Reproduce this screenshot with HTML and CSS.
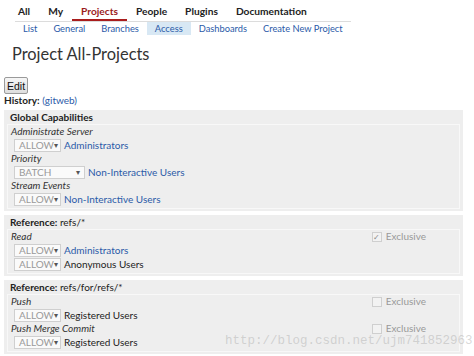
FILE: index.html
```html
<!DOCTYPE html>
<html>
  <head>
    <title>Project All-Projects</title>
    <link rel="stylesheet" href="styles.css">
  </head>
  <body>
    <!-- Top menu -->
    <div class="top-menu">
      <a class="top-item">All</a>
      <a class="top-item">My</a>
      <a class="top-item top-active">Projects</a>
      <a class="top-item">People</a>
      <a class="top-item">Plugins</a>
      <a class="top-item">Documentation</a>
    </div>
    <div class="sub-menu">
      <a class="sub-item">List</a>
      <a class="sub-item">General</a>
      <a class="sub-item">Branches</a>
      <a class="sub-item sub-active">Access</a>
      <a class="sub-item">Dashboards</a>
      <a class="sub-item">Create New Project</a>
    </div>

    <h1 class="page-title">Project All-Projects</h1>

    <button class="edit-button">Edit</button>
    <div class="history"><b>History:</b> <a class="link">(gitweb)</a></div>

    <!-- Global Capabilities -->
    <div class="section">
      <div class="section-title"><b>Global Capabilities</b></div>
      <div class="perm-box">
        <div class="perm-name">Administrate Server</div>
        <div class="rule"><span class="select">ALLOW <i>&#9662;</i></span><a class="link">Administrators</a></div>
        <div class="perm-name">Priority</div>
        <div class="rule"><span class="select select-wide">BATCH <i>&#9662;</i></span><a class="link">Non-Interactive Users</a></div>
        <div class="perm-name">Stream Events</div>
        <div class="rule"><span class="select">ALLOW <i>&#9662;</i></span><a class="link">Non-Interactive Users</a></div>
      </div>
    </div>

    <!-- refs/* -->
    <div class="section">
      <div class="section-title"><b>Reference:</b> refs/*</div>
      <div class="perm-box">
        <div class="perm-head">
          <span class="perm-name">Read</span>
          <label class="exclusive"><span class="check">&#10003;</span>Exclusive</label>
        </div>
        <div class="rule"><span class="select">ALLOW <i>&#9662;</i></span><a class="link">Administrators</a></div>
        <div class="rule"><span class="select">ALLOW <i>&#9662;</i></span><span>Anonymous Users</span></div>
      </div>
    </div>

    <!-- refs/for/refs/* -->
    <div class="section">
      <div class="section-title"><b>Reference:</b> refs/for/refs/*</div>
      <div class="perm-box">
        <div class="perm-head">
          <span class="perm-name">Push</span>
          <label class="exclusive"><span class="check"></span>Exclusive</label>
        </div>
        <div class="rule"><span class="select">ALLOW <i>&#9662;</i></span><span>Registered Users</span></div>
        <div class="perm-head">
          <span class="perm-name">Push Merge Commit</span>
          <label class="exclusive"><span class="check"></span>Exclusive</label>
        </div>
        <div class="rule"><span class="select">ALLOW <i>&#9662;</i></span><span>Registered Users</span></div>
      </div>
    </div>

    <div class="watermark">http://blog.csdn.net/ujm741852963</div>
  </body>
</html>
```
FILE: styles.css
```css
body {
  font-family: Lato, "Open Sans", sans-serif;
  font-size: 10px;
  color: #222;
  margin: 0;
  padding: 0 4px;
  position: relative;
  height: 356px;
  overflow: hidden;
}
a {
  text-decoration: none;
}
.link {
  color: #2a5aa8;
}

/* menus */
.top-menu {
  display: flex;
  padding: 4px 0 0 5px;
  white-space: nowrap;
}
.top-item {
  font-weight: bold;
  font-size: 10.2px;
  color: #222;
  padding: 0 9px;
  line-height: 15px;
  height: 15px;
  border-bottom: 2px solid transparent;
}
.top-active {
  color: #9b1c1c;
  border-bottom-color: #a91d1d;
}
.sub-menu {
  display: flex;
  width: 336px;
  margin-left: 11px;
  border-top: 1px solid #dcdcdc;
  white-space: nowrap;
}
.sub-item {
  color: #2a5aa8;
  padding: 1px 8px 0 8px;
  line-height: 12px;
  font-size: 9.3px;
}
.sub-active {
  background-color: #d8e8f4;
}

.page-title {
  font-size: 16.4px;
  font-weight: normal;
  color: #333;
  line-height: 23px;
  margin: 7px 0 12px 8px;
}

.edit-button {
  display: block;
  font-family: "Liberation Sans", sans-serif;
  font-size: 10.5px;
  padding: 0 2px;
  background: linear-gradient(#f6f6f6, #dedede);
  border: 1px solid #9a9a9a;
  border-radius: 2px;
  height: 17px;
  color: #111;
}
.history {
  line-height: 12px;
  margin-bottom: 4px;
}

/* sections */
.section {
  background-color: #eeeeee;
  width: 459px;
  padding: 1px 3px 2px 3px;
  box-sizing: border-box;
  margin-bottom: 4px;
}
.section-title {
  line-height: 13px;
  padding-left: 3px;
}
.perm-box {
  border: 1px solid #f8f8f8;
  padding: 0 3px 2px 3px;
}
.perm-name {
  font-style: italic;
  color: #333;
  line-height: 13px;
  display: block;
}
.perm-head {
  display: flex;
  justify-content: space-between;
  height: 13px;
}
.exclusive {
  color: #999;
  display: flex;
  align-items: center;
  margin-right: 30px;
  line-height: 13px;
}
.check {
  display: inline-block;
  width: 8px;
  height: 8px;
  border: 1px solid #cfcfcf;
  background: #f2f2f2;
  margin-right: 4px;
  font-size: 8px;
  line-height: 8px;
  text-align: center;
  color: #888;
}
.rule {
  display: flex;
  align-items: center;
  height: 14px;
  margin-left: 3px;
}
.select {
  display: inline-flex;
  justify-content: space-between;
  align-items: center;
  width: 47px;
  height: 13px;
  box-sizing: border-box;
  border: 1px solid #cfcfcf;
  background: #fafafa;
  color: #999;
  padding: 0 4px;
  margin-right: 3px;
}
.select i {
  font-style: normal;
  font-size: 8px;
  color: #555;
}
.select-wide {
  width: 71px;
}

.watermark {
  position: absolute;
  left: 225px;
  top: 335px;
  line-height: 13px;
  font-family: "Liberation Mono", monospace;
  font-size: 12.5px;
  color: rgba(170, 170, 170, 0.45);
}
```
